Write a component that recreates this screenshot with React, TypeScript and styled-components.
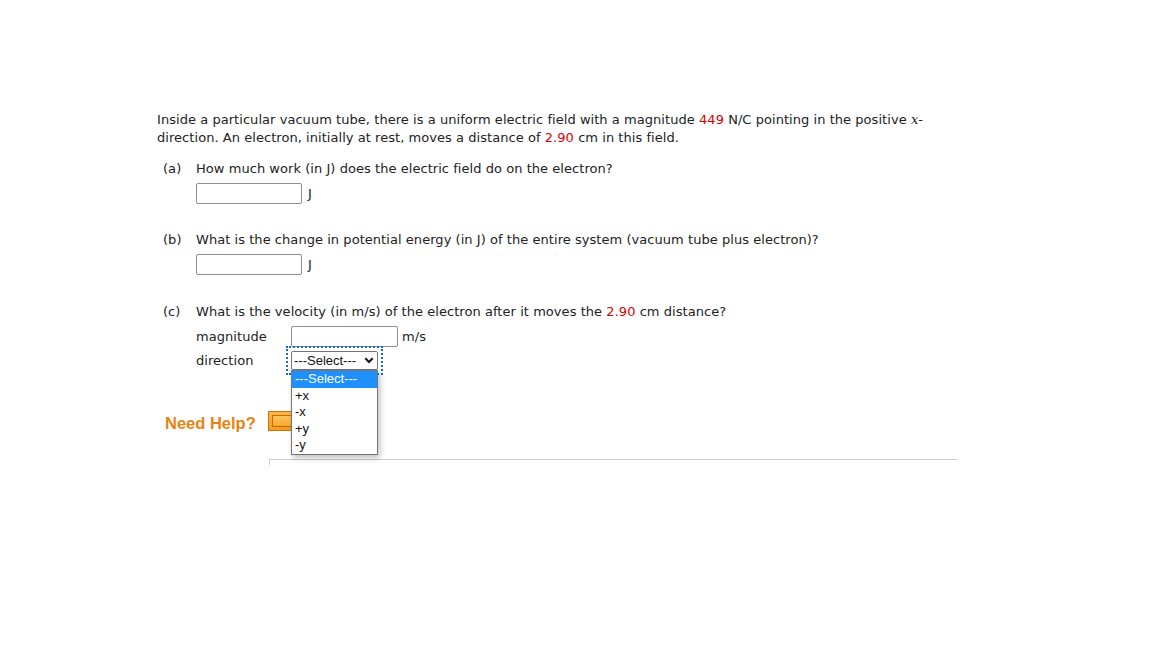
import React from "react";
import styled, { createGlobalStyle } from "styled-components";

const GlobalStyle = createGlobalStyle`
  body {
    margin: 0;
    background: #ffffff;
    font-family: "DejaVu Sans", Verdana, sans-serif;
    font-size: 13px;
    color: #222222;
  }
`;

const Page = styled.div`
  padding: 111px 0 0 157px;
  width: 800px;
  letter-spacing: 0.05px;
`;

const Intro = styled.p`
  margin: 0;
  width: 780px;
  line-height: 18px;
`;

const Red = styled.span`
  color: #d90000;
`;

const Var = styled.i`
  font-family: "DejaVu Serif", "Liberation Serif", serif;
`;

const Part = styled.div<{ $gap: number }>`
  display: grid;
  grid-template-columns: 33px auto;
  margin: ${(p) => p.$gap}px 0 0 6px;
`;

const PartLabel = styled.div`
  line-height: 18px;
`;

const PartBody = styled.div`
  display: flex;
  flex-direction: column;
`;

const Question = styled.div`
  line-height: 18px;
`;

const AnswerRow = styled.div`
  display: flex;
  align-items: center;
  margin-top: 5px;
  gap: 6px;
`;

const TextBox = styled.input<{ $width: number }>`
  box-sizing: border-box;
  width: ${(p) => p.$width}px;
  height: 21px;
  margin: 0;
  border: 1px solid #8f8f8f;
  border-radius: 2px;
  padding: 0 4px;
  font-size: 13px;
  background: #ffffff;
`;

const Unit = styled.span`
  font-size: 13px;
`;

const FieldGrid = styled.div`
  display: grid;
  grid-template-columns: 95px auto;
  row-gap: 4px;
  margin-top: 5px;
  align-items: center;
`;

const FieldLabel = styled.span`
  line-height: 18px;
`;

const FieldCell = styled.div`
  display: flex;
  align-items: center;
  gap: 4px;
`;

const SelectWrap = styled.div`
  position: relative;
  outline: 2px dotted #1469d2;
  outline-offset: 3px;
`;

const SelectBox = styled.div`
  box-sizing: border-box;
  width: 87px;
  height: 19px;
  border: 1px solid #767676;
  border-radius: 2px;
  display: flex;
  align-items: center;
  justify-content: space-between;
  padding: 0 3px 0 2px;
  font-family: "Liberation Sans", Arial, sans-serif;
  font-size: 13px;
  letter-spacing: 0;
  color: #111111;
`;

const DropList = styled.div`
  position: absolute;
  top: 19px;
  left: 0;
  box-sizing: border-box;
  width: 87px;
  border: 1px solid #767676;
  background: #ffffff;
  box-shadow: 2px 3px 6px rgba(0, 0, 0, 0.25);
  z-index: 5;
  font-family: "Liberation Sans", Arial, sans-serif;
  font-size: 13px;
  letter-spacing: 0;
`;

const Option = styled.div<{ $active?: boolean }>`
  height: 16.5px;
  line-height: 16.5px;
  padding: 0 3px;
  color: ${(p) => (p.$active ? "#ffffff" : "#111111")};
  background: ${(p) => (p.$active ? "#1e90ff" : "transparent")};
`;

const HelpRow = styled.div`
  display: flex;
  align-items: flex-start;
  margin: 41px 0 0 8px;
`;

const HelpLabel = styled.span`
  font-family: "Liberation Sans", Arial, sans-serif;
  font-weight: bold;
  font-size: 16.5px;
  color: #e8830f;
  line-height: 20px;
  margin-top: 2px;
  width: 103px;
  letter-spacing: 0;
`;

const HelpColumn = styled.div`
  display: flex;
  flex-direction: column;
`;

const HelpButton = styled.div`
  box-sizing: border-box;
  width: 60px;
  height: 20px;
  border: 1px solid #d0720c;
  background: linear-gradient(#f9b94a, #f39c1f);
  padding: 3px;
  & > div {
    height: 100%;
    border: 1px solid #c96a08;
    background: linear-gradient(#fcc55e, #f7a82d);
    box-sizing: border-box;
  }
`;

const HelpPanel = styled.div`
  margin: 28px 0 0 1px;
  width: 687px;
  height: 5px;
  border-top: 1px solid #cccccc;
  border-left: 1px solid #cccccc;
`;

function Chevron() {
  return (
    <svg width="10" height="7" viewBox="0 0 10 7">
      <path d="M1.3 1.3 L5 5 L8.7 1.3" fill="none" stroke="#111" strokeWidth="2" />
    </svg>
  );
}

export default function App() {
  const options = ["+x", "-x", "+y", "-y"];
  return (
    <>
      <GlobalStyle />
      <Page>
        <Intro>
          Inside a particular vacuum tube, there is a uniform electric field with a magnitude{" "}
          <Red>449</Red> N/C pointing in the positive <Var>x</Var>-direction. An electron, initially at
          rest, moves a distance of <Red>2.90</Red> cm in this field.
        </Intro>

        <Part $gap={13}>
          <PartLabel>(a)</PartLabel>
          <PartBody>
            <Question>How much work (in J) does the electric field do on the electron?</Question>
            <AnswerRow>
              <TextBox $width={106} />
              <Unit>J</Unit>
            </AnswerRow>
          </PartBody>
        </Part>

        <Part $gap={27}>
          <PartLabel>(b)</PartLabel>
          <PartBody>
            <Question>
              What is the change in potential energy (in J) of the entire system (vacuum tube plus
              electron)?
            </Question>
            <AnswerRow>
              <TextBox $width={106} />
              <Unit>J</Unit>
            </AnswerRow>
          </PartBody>
        </Part>

        <Part $gap={28}>
          <PartLabel>(c)</PartLabel>
          <PartBody>
            <Question>
              What is the velocity (in m/s) of the electron after it moves the <Red>2.90</Red> cm
              distance?
            </Question>
            <FieldGrid>
              <FieldLabel>magnitude</FieldLabel>
              <FieldCell>
                <TextBox $width={107} />
                <Unit>m/s</Unit>
              </FieldCell>
              <FieldLabel>direction</FieldLabel>
              <FieldCell>
                <SelectWrap>
                  <SelectBox>
                    <span>---Select---</span>
                    <Chevron />
                  </SelectBox>
                  <DropList>
                    <Option $active>---Select---</Option>
                    {options.map((o) => (
                      <Option key={o}>{o}</Option>
                    ))}
                  </DropList>
                </SelectWrap>
              </FieldCell>
            </FieldGrid>
          </PartBody>
        </Part>

        <HelpRow>
          <HelpLabel>Need Help?</HelpLabel>
          <HelpColumn>
            <HelpButton>
              <div />
            </HelpButton>
            <HelpPanel />
          </HelpColumn>
        </HelpRow>
      </Page>
    </>
  );
}
